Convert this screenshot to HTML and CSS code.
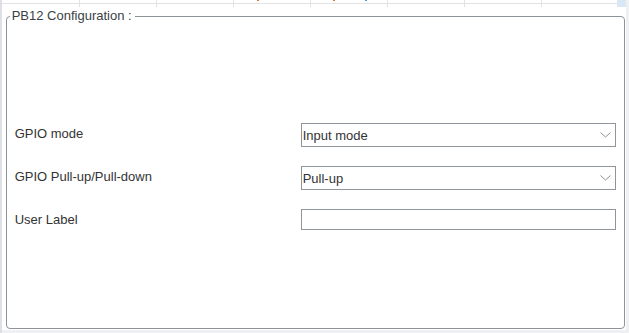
FILE: index.html
```html
<!DOCTYPE html>
<html>

<head>
    <meta charset="UTF-8">
    <title>PB12 Configuration</title>
    <link rel="stylesheet" href="styles.css">
</head>

<body>
    <div class="edge-left"></div>
    <div class="main">
        <div class="table-strip">
            <div class="cell first"></div>
            <div class="cell"></div>
            <div class="cell"></div>
            <div class="cell"><i class="tick red t1"></i></div>
            <div class="cell"><i class="tick red t2"></i><i class="tick blue t3"></i></div>
            <div class="cell"></div>
            <div class="cell"></div>
            <div class="cell last"></div>
            <div class="scroll-knob"></div>
        </div>

        <fieldset class="config">
            <legend>PB12 Configuration :</legend>
            <div class="form-grid">
                <label class="row-label">GPIO mode</label>
                <div class="select">
                    <span>Input mode</span>
                    <svg class="chevron" width="11" height="6" viewBox="0 0 11 6">
                        <polyline points="0.5,0.5 5.5,5 10.5,0.5" />
                    </svg>
                </div>

                <label class="row-label">GPIO Pull-up/Pull-down</label>
                <div class="select">
                    <span>Pull-up</span>
                    <svg class="chevron" width="11" height="6" viewBox="0 0 11 6">
                        <polyline points="0.5,0.5 5.5,5 10.5,0.5" />
                    </svg>
                </div>

                <label class="row-label" for="user-label">User Label</label>
                <input type="text" id="user-label" class="text-field">
            </div>
        </fieldset>
        <div class="bottom-strip"></div>
    </div>
    <div class="edge-right"></div>
</body>

</html>
```

FILE: styles.css
```css
/* page frame */
html,
body {
    margin: 0;
    height: 333px;
    overflow: hidden;
}

body {
    display: flex;
    background: #ffffff;
    font-family: "Liberation Sans", Arial, sans-serif;
    font-size: 13px;
    color: #333333;
}

.edge-left {
    width: 2px;
    background: #dde1e5;
}

.edge-right {
    width: 4px;
    background: #eff0f1;
}

.main {
    flex: 1;
    display: flex;
    flex-direction: column;
}

/* cut-off table above the panel */
.table-strip {
    display: flex;
    height: 7px;
    background: linear-gradient(#ffffff 3px, #e2e2e2 3px, #e2e2e2 4px, #ffffff 4px);
}

.cell {
    position: relative;
    width: 76px;
    border-right: 1px solid #e2e2e2;
}

.cell.first {
    width: 77px;
}

.cell.last {
    width: 75px;
    border-right: none;
}

.tick {
    position: absolute;
    top: 0;
    width: 2px;
    height: 1px;
}

.tick.red {
    background: #d9782f;
}

.tick.blue {
    background: #4f9ad8;
}

.t1 {
    left: 23px;
}

.t2 {
    left: 22px;
}

.t3 {
    left: 54px;
}

.scroll-knob {
    width: 9px;
    height: 7px;
    margin-left: auto;
    background: #dae7f5;
}

/* configuration panel */
.config {
    flex: 1;
    margin: 2px 1px 1px 4px;
    padding: 0 8px 0 8px;
    border: 1px solid #8c9399;
    border-radius: 4px;
    min-width: 0;
}

.config legend {
    margin-left: -5px;
    padding: 0 3px 0 2px;
    line-height: 14px;
    color: #3a3f45;
}

.form-grid {
    display: grid;
    grid-template-columns: 1fr 315px;
    grid-auto-rows: 43px;
    align-items: start;
    padding-top: 100px;
}

.row-label {
    line-height: 22px;
    color: #333333;
}

.select {
    display: flex;
    align-items: center;
    justify-content: space-between;
    box-sizing: border-box;
    height: 24px;
    padding: 0 4px 0 1px;
    border: 1px solid #8f959b;
    background: #ffffff;
}

.chevron {
    fill: none;
    stroke: #8d9196;
    stroke-width: 1;
}

.text-field {
    box-sizing: border-box;
    width: 315px;
    height: 21px;
    margin: 0;
    padding: 0 2px;
    border: 1px solid #8f959b;
    font: inherit;
    outline: none;
}

.bottom-strip {
    height: 3px;
    background: #eff0f1;
}
```
